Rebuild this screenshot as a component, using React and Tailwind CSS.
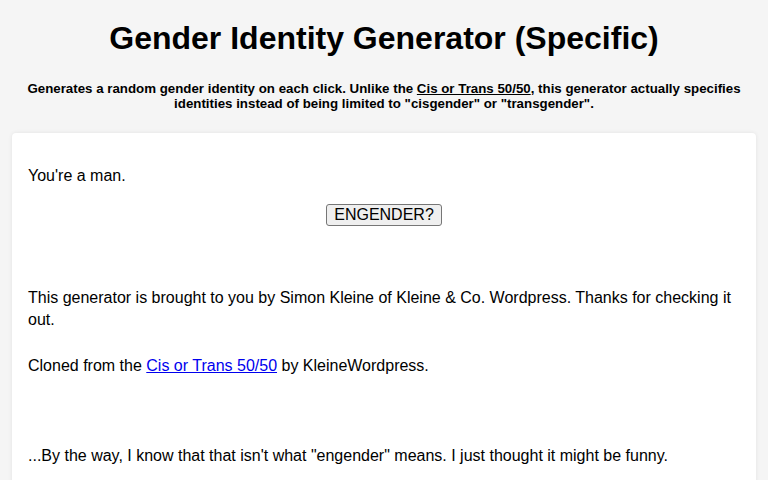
export default function App() {
  return (
    <div className="min-h-[480px] bg-[#f5f5f5] font-['Liberation_Sans',Arial,sans-serif] text-black">
      <h1 className="pt-[20px] text-center text-[32px] font-bold leading-[37px]">
        Gender Identity Generator (Specific)
      </h1>
      <p className="mx-auto mt-[24px] max-w-[730px] text-center text-[13.3px] font-bold leading-[15px]">
        Generates a random gender identity on each click. Unlike the{' '}
        <a href="#" className="underline">Cis or Trans 50/50</a>, this generator actually specifies identities instead of
        being limited to "cisgender" or "transgender".
      </p>
      <div className="mx-3 mt-[22px] rounded-sm bg-white px-4 pb-[20px] pt-[34px] text-base shadow-[0_0_4px_rgba(0,0,0,0.08)]">
        <p className="leading-[18px]">You're a man.</p>
        <div className="mt-[19px] flex justify-center">
          <button className="h-[22px] rounded-[3px] border border-[#767676] bg-[#efefef] px-[7px] text-base leading-[18px]">
            ENGENDER?
          </button>
        </div>
        <p className="mt-[61px] leading-[22px]">
          This generator is brought to you by Simon Kleine of Kleine &amp; Co. Wordpress. Thanks for checking it out.
        </p>
        <p className="mt-[24px] leading-[22px]">
          Cloned from the{' '}
          <a href="#" className="text-[#0000ee] underline">Cis or Trans 50/50</a> by KleineWordpress.
        </p>
        <p className="mt-[68px] leading-[22px]">
          ...By the way, I know that that isn't what "engender" means. I just thought it might be funny.
        </p>
      </div>
    </div>
  );
}
